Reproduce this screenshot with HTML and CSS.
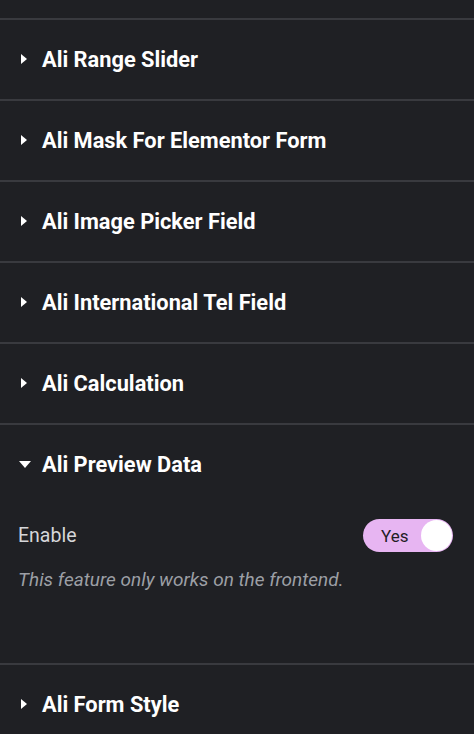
FILE: index.html
```html
<!DOCTYPE html>
<html>
	<head>
		<meta charset="UTF-8">
		<title></title>
		<link rel="stylesheet" href="styles.css">
	</head>
	<body>
		<div class="panel">
			<div class="top"></div>
			<div class="section">
				<div class="head"><span class="arrow"></span>Ali Range Slider</div>
			</div>
			<div class="section">
				<div class="head"><span class="arrow"></span>Ali Mask For Elementor Form</div>
			</div>
			<div class="section">
				<div class="head"><span class="arrow"></span>Ali Image Picker Field</div>
			</div>
			<div class="section">
				<div class="head"><span class="arrow"></span>Ali International Tel Field</div>
			</div>
			<div class="section">
				<div class="head"><span class="arrow"></span>Ali Calculation</div>
			</div>
			<div class="section open">
				<div class="head"><span class="arrow down"></span>Ali Preview Data</div>
				<div class="content">
					<div class="control">
						<span class="label">Enable</span>
						<div class="switch">
							<span class="yes">Yes</span>
							<span class="knob"></span>
						</div>
					</div>
					<div class="desc">This feature only works on the frontend.</div>
				</div>
			</div>
			<div class="section">
				<div class="head"><span class="arrow"></span>Ali Form Style</div>
			</div>
		</div>
	</body>
</html>
```

FILE: styles.css
```css
*{
	margin:0;padding:0;
	box-sizing:border-box;
}
body{
	background:#1f2024;
	font-family:Roboto,"Liberation Sans",sans-serif;
	overflow:hidden;
}
.top{
	height:18px;
}
.section{
	border-top:2px solid #393a3f;
}
.head{
	height:79px;
	display:flex;
	align-items:center;
	padding-left:21px;
	font-size:21.8px;
	font-weight:bold;
	color:#fff;
}
.arrow{
	width:0;
	height:0;
	border-top:5px solid transparent;
	border-bottom:5px solid transparent;
	border-left:6px solid #fff;
	margin-right:15px;
	margin-top:-1px;
}
.arrow.down{
	border-left:6px solid transparent;
	border-right:6px solid transparent;
	border-top:7px solid #fff;
	border-bottom:0;
	margin-left:-2px;
	margin-right:11px;
}
.content{
	padding:15px 21px 71px 18px;
}
.control{
	display:flex;
	justify-content:space-between;
	align-items:center;
	height:33px;
}
.label{
	font-size:19.5px;
	color:#d5d6d9;
}
.switch{
	width:90px;
	height:33px;
	border-radius:17px;
	background:#e7b5f2;
	display:flex;
	align-items:center;
	justify-content:space-between;
	padding:0 1px 0 18px;
}
.yes{
	font-size:17px;
	color:#1f2024;
}
.knob{
	width:31px;
	height:31px;
	border-radius:50%;
	background:#fff;
}
.desc{
	margin-top:16px;
	font-size:19px;
	line-height:24px;
	font-style:italic;
	color:#9c9fa5;
}
```
